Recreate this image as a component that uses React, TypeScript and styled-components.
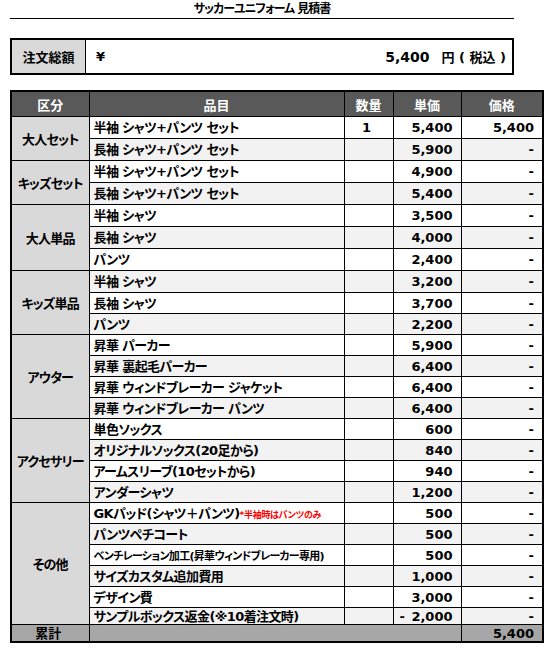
import React from 'react';
import styled, { createGlobalStyle } from 'styled-components';

const GlobalStyle = createGlobalStyle`
  html, body {
    margin: 0;
    padding: 0;
    background: #fff;
  }
  body {
    font-family: "DejaVu Sans", "Noto Sans CJK JP", sans-serif;
    font-weight: bold;
    font-feature-settings: "palt";
    color: #000;
  }
`;

const Page = styled.div`
  width: 532px;
  padding: 0 10px;
`;

const Title = styled.h1`
  width: 504px;
  margin: 0;
  height: 19px;
  box-sizing: border-box;
  padding-top: 1px;
  border-bottom: 1px solid #000;
  font-size: 12px;
  letter-spacing: -1px;
  line-height: 16px;
  font-weight: bold;
  text-align: center;
`;

const Summary = styled.div`
  margin-top: 19px;
  width: 504px;
  height: 37px;
  box-sizing: border-box;
  border: 2px solid #000;
  display: flex;
  font-size: 13px;
`;

const SummaryLabel = styled.div`
  width: 73px;
  background: #d9d9d9;
  border-right: 1px solid #000;
  display: flex;
  align-items: center;
  justify-content: center;
`;

const SummaryValue = styled.div`
  flex: 1;
  display: flex;
  align-items: center;
  padding: 0 6px 0 10px;
`;

const Yen = styled.span`
  flex: 1;
`;

const Amount = styled.span`
  font-size: 14px;
  margin-right: 12px;
`;

const Tax = styled.span`
  white-space: pre;
`;

const Table = styled.table`
  margin-top: 15px;
  width: 532px;
  border-collapse: collapse;
  table-layout: fixed;
  border: 2px solid #000;
  font-size: 13px;
`;

const HeadCell = styled.th`
  background: #595959;
  color: #fff;
  height: 24px;
  padding: 0;
  border: 1px solid #000;
  font-weight: bold;
  text-align: center;
`;

const Row = styled.tr<{ $h: number }>`
  height: ${p => p.$h}px;
`;

const Cat = styled.td`
  background: #d9d9d9;
  border: 1px solid #000;
  text-align: center;
  vertical-align: middle;
  padding: 0;
  letter-spacing: -0.8px;
`;

const Cell = styled.td<{ $alt: boolean; $align?: string }>`
  background: ${p => (p.$alt ? '#f2f2f2' : '#fff')};
  border: 1px solid #000;
  padding: 0 8px 0 4px;
  text-align: ${p => p.$align || 'left'};
  white-space: nowrap;
  overflow: hidden;
  line-height: 1;
`;

const Name = styled.span<{ $small?: boolean }>`
  font-size: ${p => (p.$small ? 11 : 13)}px;
  letter-spacing: ${p => (p.$small ? -0.7 : -0.6)}px;
`;

const Note = styled.span`
  color: #ff0000;
  font-size: 9px;
  letter-spacing: -0.3px;
`;

const Minus = styled.span`
  float: left;
  padding-left: 2px;
`;

const TotalCell = styled.td<{ $align?: string }>`
  background: #a6a6a6;
  border: 1px solid #000;
  height: 16px;
  padding: 0 8px 0 4px;
  text-align: ${p => p.$align || 'center'};
  line-height: 1;
`;

type Item = {
  name: string;
  unit: string;
  qty?: string;
  price?: string;
  note?: string;
  small?: boolean;
  negative?: boolean;
};

type Group = { cat: string; items: Item[] };

const groups: Group[] = [
  {
    cat: '大人セット',
    items: [
      { name: '半袖 シャツ+パンツ セット', qty: '1', unit: '5,400', price: '5,400' },
      { name: '長袖 シャツ+パンツ セット', unit: '5,900' },
    ],
  },
  {
    cat: 'キッズセット',
    items: [
      { name: '半袖 シャツ+パンツ セット', unit: '4,900' },
      { name: '長袖 シャツ+パンツ セット', unit: '5,400' },
    ],
  },
  {
    cat: '大人単品',
    items: [
      { name: '半袖 シャツ', unit: '3,500' },
      { name: '長袖 シャツ', unit: '4,000' },
      { name: 'パンツ', unit: '2,400' },
    ],
  },
  {
    cat: 'キッズ単品',
    items: [
      { name: '半袖 シャツ', unit: '3,200' },
      { name: '長袖 シャツ', unit: '3,700' },
      { name: 'パンツ', unit: '2,200' },
    ],
  },
  {
    cat: 'アウター',
    items: [
      { name: '昇華 パーカー', unit: '5,900' },
      { name: '昇華 裏起毛パーカー', unit: '6,400' },
      { name: '昇華 ウィンドブレーカー ジャケット', unit: '6,400' },
      { name: '昇華 ウィンドブレーカー パンツ', unit: '6,400' },
    ],
  },
  {
    cat: 'アクセサリー',
    items: [
      { name: '単色ソックス', unit: '600' },
      { name: 'オリジナルソックス(20足から)', unit: '840' },
      { name: 'アームスリーブ(10セットから)', unit: '940' },
      { name: 'アンダーシャツ', unit: '1,200' },
    ],
  },
  {
    cat: 'その他',
    items: [
      { name: 'GKパッド(シャツ＋パンツ)', note: '*半袖時はパンツのみ', unit: '500' },
      { name: 'パンツペチコート', unit: '500' },
      { name: 'ベンチレーション加工(昇華ウィンドブレーカー専用)', unit: '500', small: true },
      { name: 'サイズカスタム追加費用', unit: '1,000' },
      { name: 'デザイン費', unit: '3,000' },
      { name: 'サンプルボックス返金(※10着注文時)', unit: '2,000', negative: true },
    ],
  },
];

const rowHeight = (index: number, last: boolean) => {
  if (last) return 17;
  return index < 8 ? 22 : 21;
};

const App: React.FC = () => {
  let index = 0;
  const totalRows = groups.reduce((n, g) => n + g.items.length, 0);

  return (
    <Page>
      <GlobalStyle />
      <Title>サッカーユニフォーム 見積書</Title>

      <Summary>
        <SummaryLabel>注文総額</SummaryLabel>
        <SummaryValue>
          <Yen>¥</Yen>
          <Amount>5,400</Amount>
          <Tax>円 ( 税込 )</Tax>
        </SummaryValue>
      </Summary>

      <Table>
        <colgroup>
          <col style={{ width: 78 }} />
          <col style={{ width: 255 }} />
          <col style={{ width: 49 }} />
          <col style={{ width: 68 }} />
          <col style={{ width: 82 }} />
        </colgroup>
        <thead>
          <tr>
            <HeadCell>区分</HeadCell>
            <HeadCell>品目</HeadCell>
            <HeadCell>数量</HeadCell>
            <HeadCell>単価</HeadCell>
            <HeadCell>価格</HeadCell>
          </tr>
        </thead>
        <tbody>
          {groups.map(group =>
            group.items.map((item, i) => {
              const alt = index % 2 === 1;
              const h = rowHeight(index, index === totalRows - 1);
              index += 1;
              return (
                <Row key={`${group.cat}-${i}`} $h={h}>
                  {i === 0 && <Cat rowSpan={group.items.length}>{group.cat}</Cat>}
                  <Cell $alt={alt}>
                    <Name $small={item.small}>{item.name}</Name>
                    {item.note && <Note>{item.note}</Note>}
                  </Cell>
                  <Cell $alt={alt} $align="center">{item.qty}</Cell>
                  <Cell $alt={alt} $align="right">
                    {item.negative && <Minus>-</Minus>}
                    {item.unit}
                  </Cell>
                  <Cell $alt={alt} $align="right">{item.price || '-'}</Cell>
                </Row>
              );
            })
          )}
          <tr>
            <TotalCell>累計</TotalCell>
            <TotalCell colSpan={3} />
            <TotalCell $align="right">5,400</TotalCell>
          </tr>
        </tbody>
      </Table>
    </Page>
  );
};

export default App;
